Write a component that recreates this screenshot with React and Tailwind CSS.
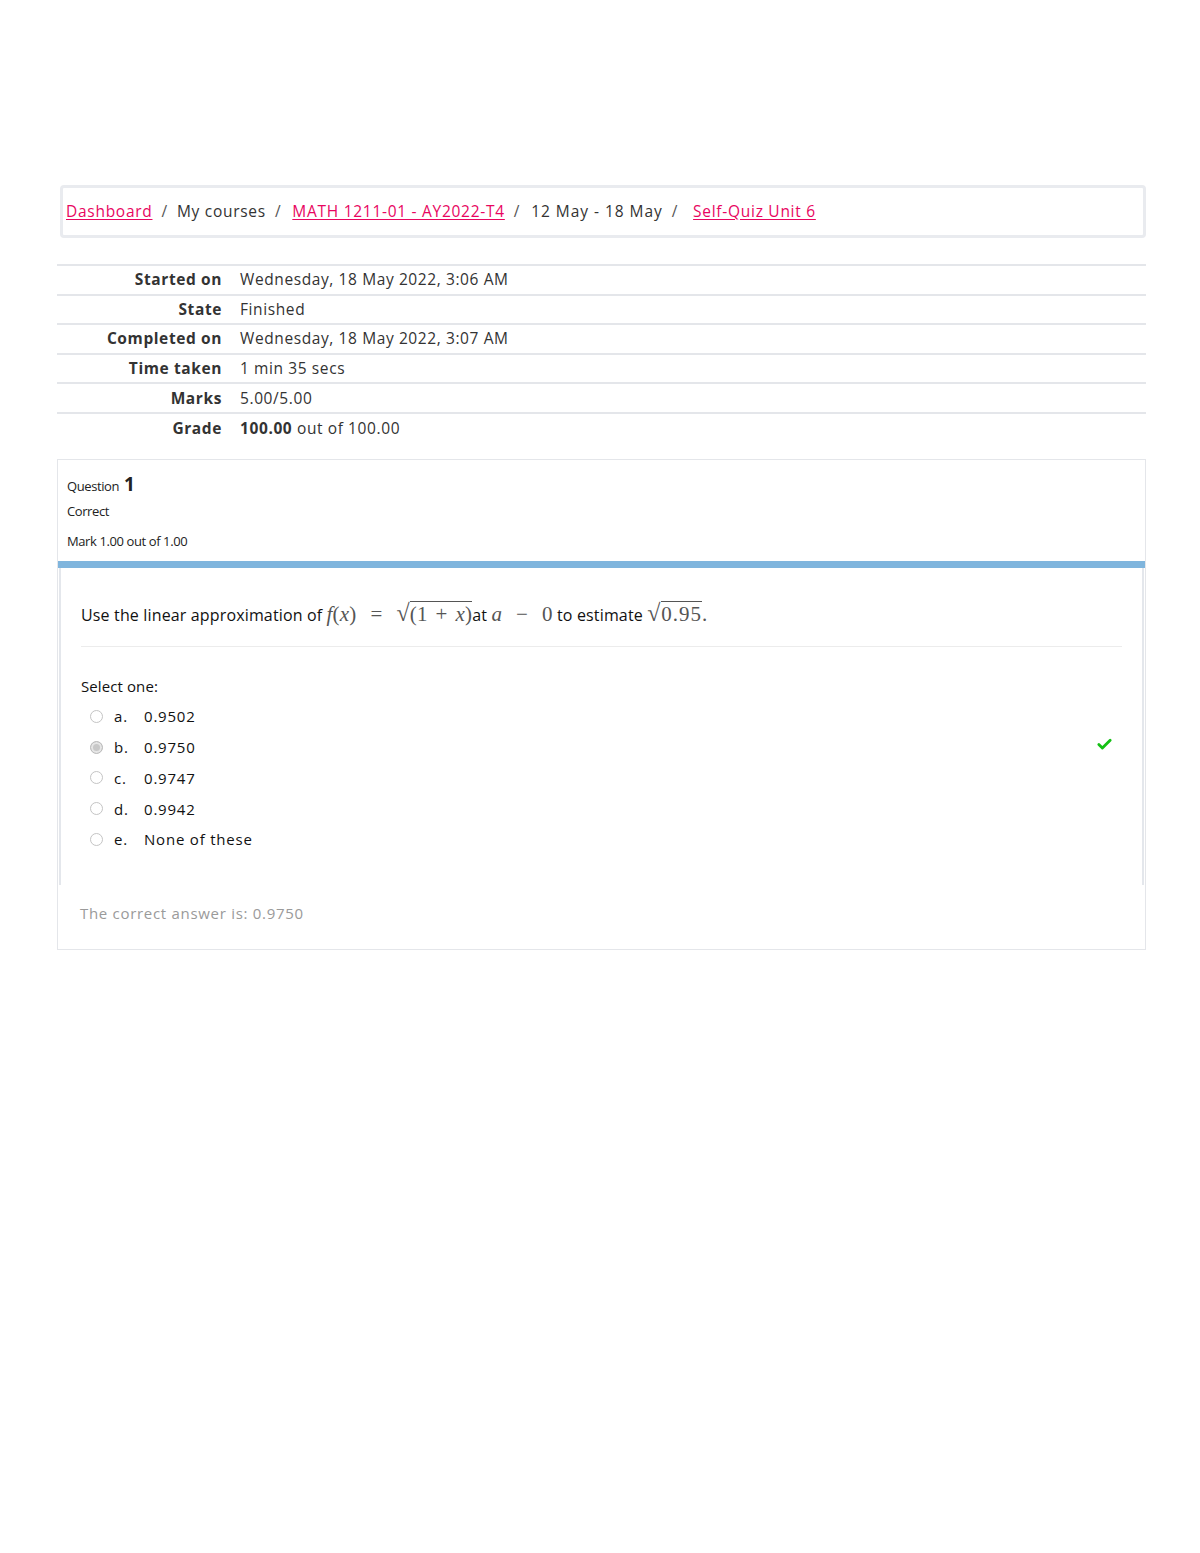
import { Check } from 'lucide-react';

const font = { fontFamily: '"Open Sans", "Noto Sans", sans-serif' };
const mathFont = { fontFamily: '"Liberation Serif", serif' };

const rows = [
  ['Started on', 'Wednesday, 18 May 2022, 3:06 AM'],
  ['State', 'Finished'],
  ['Completed on', 'Wednesday, 18 May 2022, 3:07 AM'],
  ['Time taken', '1 min 35 secs'],
  ['Marks', '5.00/5.00'],
];

const options = [
  ['a.', '0.9502', false],
  ['b.', '0.9750', true],
  ['c.', '0.9747', false],
  ['d.', '0.9942', false],
  ['e.', 'None of these', false],
];

function Crumb({ children }) {
  return <a href="#" className="text-[#e8065f] underline underline-offset-2">{children}</a>;
}

function Sep() {
  return <span className="mx-[9px] text-[#555]">/</span>;
}

export default function App() {
  return (
    <div className="min-h-[1553px] w-[1200px] bg-white pt-[185px] text-[#222]" style={font}>
      <div className="ml-[60px] mr-[54px] flex h-[53px] items-center rounded-sm border-[3px] border-[#e9ebef] px-[3px] text-[15.5px] tracking-[0.72px]">
        <Crumb>Dashboard</Crumb>
        <Sep />
        <span className="text-[#333]">My courses</span>
        <Sep />
        <span className="ml-[2px]"><Crumb>MATH 1211-01 - AY2022-T4</Crumb></span>
        <Sep />
        <span className="ml-[2px] tracking-[0.95px] text-[#333]">12 May - 18 May</span>
        <Sep />
        <span className="ml-[6px]"><Crumb>Self-Quiz Unit 6</Crumb></span>
      </div>

      <table className="ml-[57px] mt-[26px] w-[1089px] border-collapse text-[15.5px] tracking-[0.6px]">
        <tbody>
          {rows.map(([k, v]) => (
            <tr key={k} className="border-t-2 border-[#e4e6ea]">
              <th className="h-[29.6px] w-[183px] pr-[18px] text-right font-bold text-[#333]">{k}</th>
              <td className="h-[29.6px] text-[#333]">{v}</td>
            </tr>
          ))}
          <tr className="border-t-2 border-[#e4e6ea]">
            <th className="h-[30px] w-[183px] pr-[18px] text-right font-bold text-[#333]">Grade</th>
            <td className="h-[30px] text-[#333]">
              <b>100.00</b> out of 100.00
            </td>
          </tr>
        </tbody>
      </table>

      <div className="ml-[57px] mt-[16px] w-[1089px] border border-[#e4e6ea]">
        <div className="px-[9px] pt-[10px] text-[13px] tracking-[-0.4px] text-[#222]">
          <div className="flex items-baseline gap-[5px]">
            <span>Question</span>
            <span className="text-[19px] font-bold">1</span>
          </div>
          <div className="mt-[4px]">Correct</div>
          <div className="mt-[10px]">Mark 1.00 out of 1.00</div>
        </div>
        <div className="mt-[10px] h-[7px] bg-[#7fb5dd]" />
        <div className="mx-[1px] border-x-[2px] border-[#e4e7ec] px-[20px] pt-[27px] pb-[30px]">
          <div className="flex items-baseline text-[16px] tracking-[0.15px] text-[#111]">
            <span>Use the linear approximation of&nbsp;</span>
            <span className="text-[21px] text-[#555]" style={mathFont}>
              <i>f</i>(<i>x</i>)<span className="mx-[14px]">=</span><span className="text-[24px]">√</span><span className="border-t border-[#555]">(1<span className="mx-[8px]">+</span><i>x</i>)</span>
            </span>
            <span>at&nbsp;</span>
            <span className="text-[21px] text-[#555]" style={mathFont}>
              <i>a</i><span className="mx-[14px]">−</span>0
            </span>
            <span>&nbsp;to estimate&nbsp;</span>
            <span className="text-[21px] tracking-[1px] text-[#555]" style={mathFont}>
              <span className="text-[24px]">√</span><span className="border-t border-[#555]">0.95</span>.
            </span>
          </div>
          <div className="mt-[15px] border-t border-[#ececec]" />
          <div className="mt-[28px] text-[15px] tracking-[0.1px] text-[#111]">Select one:</div>
          <div className="relative mt-[3px]">
            {options.map(([l, v, sel]) => (
              <div key={l} className="flex h-[30.8px] items-center text-[15px] tracking-[0.8px] text-[#111]">
                <span
                  className={`ml-[9px] h-[13px] w-[13px] rounded-full border ${
                    sel ? 'border-[#bbb] bg-[#c8c8c8] shadow-[inset_0_0_0_2px_#e6e6e6]' : 'border-[#c4c4c4] bg-white'
                  }`}
                />
                <span className="ml-[11px] w-[30px]">{l}</span>
                <span>{v}</span>
              </div>
            ))}
            <Check className="absolute right-[9px] top-[35px] h-[17px] w-[17px] text-[#15c015]" strokeWidth={4} />
          </div>
        </div>
        <div className="px-[22px] pb-[25px] pt-[17px] text-[15px] tracking-[0.7px] text-[#9a9a9a]">
          The correct answer is: 0.9750
        </div>
      </div>
    </div>
  );
}
